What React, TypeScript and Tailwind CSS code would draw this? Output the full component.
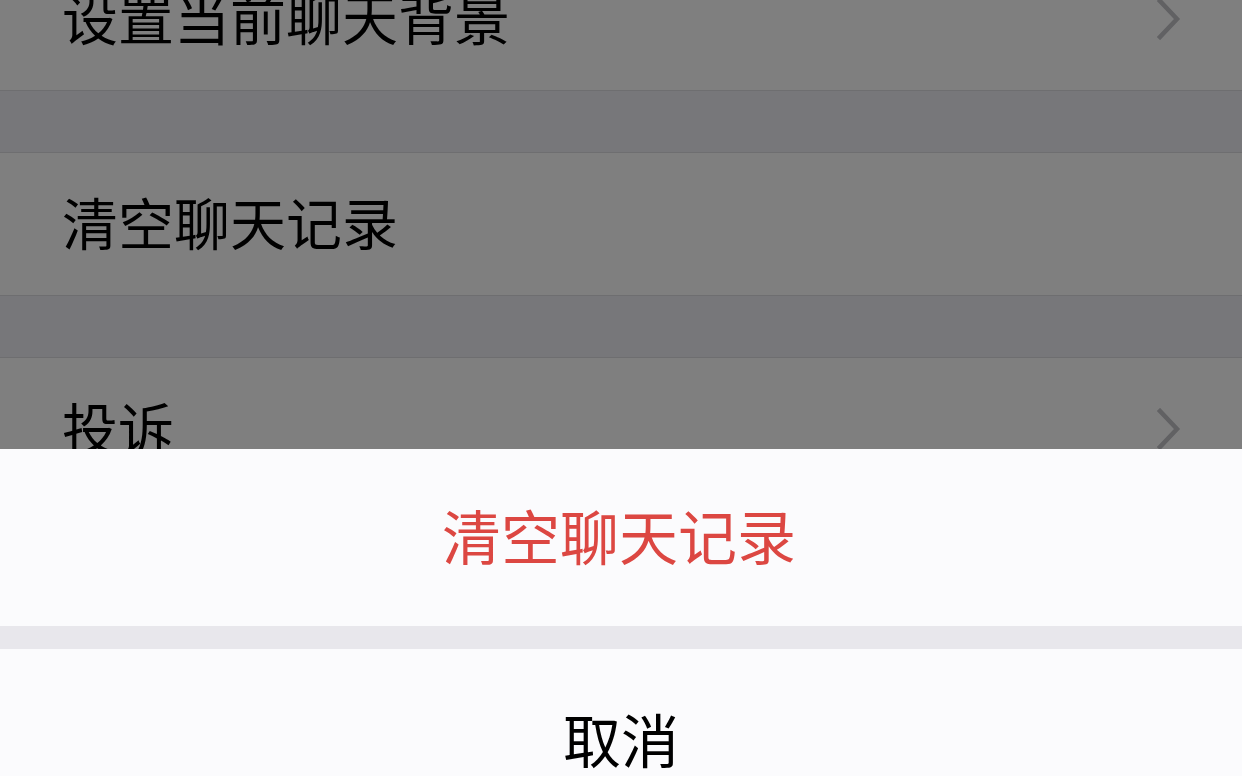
import React from 'react';

const font = { fontFamily: '"Noto Sans CJK SC", "Noto Sans", sans-serif' };

const Chevron: React.FC = () => (
  <svg width="26" height="42" viewBox="0 0 26 42" fill="none">
    <polyline points="4,3 21,21 4,39" stroke="#c2c2c7" strokeWidth="4.5" strokeLinecap="square" strokeLinejoin="miter" />
  </svg>
);

interface RowProps {
  label: string;
  arrow?: boolean;
}

const Row: React.FC<RowProps> = ({ label, arrow }) => (
  <div className="h-[144px] bg-white flex items-center justify-between pl-[62px] pr-[60px] border-y border-[#dcdce0]">
    <span className="text-[56px] leading-none text-black pb-[6px]">{label}</span>
    {arrow && <Chevron />}
  </div>
);

const Gap: React.FC = () => <div className="h-[61px] bg-[#efeef4]" />;

const App: React.FC = () => {
  return (
    <div className="relative w-[1242px] h-[776px] overflow-hidden bg-[#efeef4]" style={font}>
      <div className="flex flex-col -mt-[53px]">
        <Row label="设置当前聊天背景" arrow />
        <Gap />
        <Row label="清空聊天记录" />
        <Gap />
        <Row label="投诉" arrow />
        <Gap />
        <Row label="" />
      </div>

      {/* dim overlay */}
      <div className="absolute inset-0 bg-black/50" />

      {/* action sheet */}
      <div className="absolute left-0 right-0 top-[449px] flex flex-col bg-[#e8e7ec]">
        <button className="h-[177px] bg-[#fbfbfd] flex items-center justify-center text-[59px] leading-none text-[#dc4742] pr-[4px] pb-[6px]">
          清空聊天记录
        </button>
        <div className="h-[23px]" />
        <button className="h-[177px] bg-[#fbfbfd] flex items-center justify-center text-[58px] leading-none text-black">
          取消
        </button>
      </div>
    </div>
  );
};

export default App;
